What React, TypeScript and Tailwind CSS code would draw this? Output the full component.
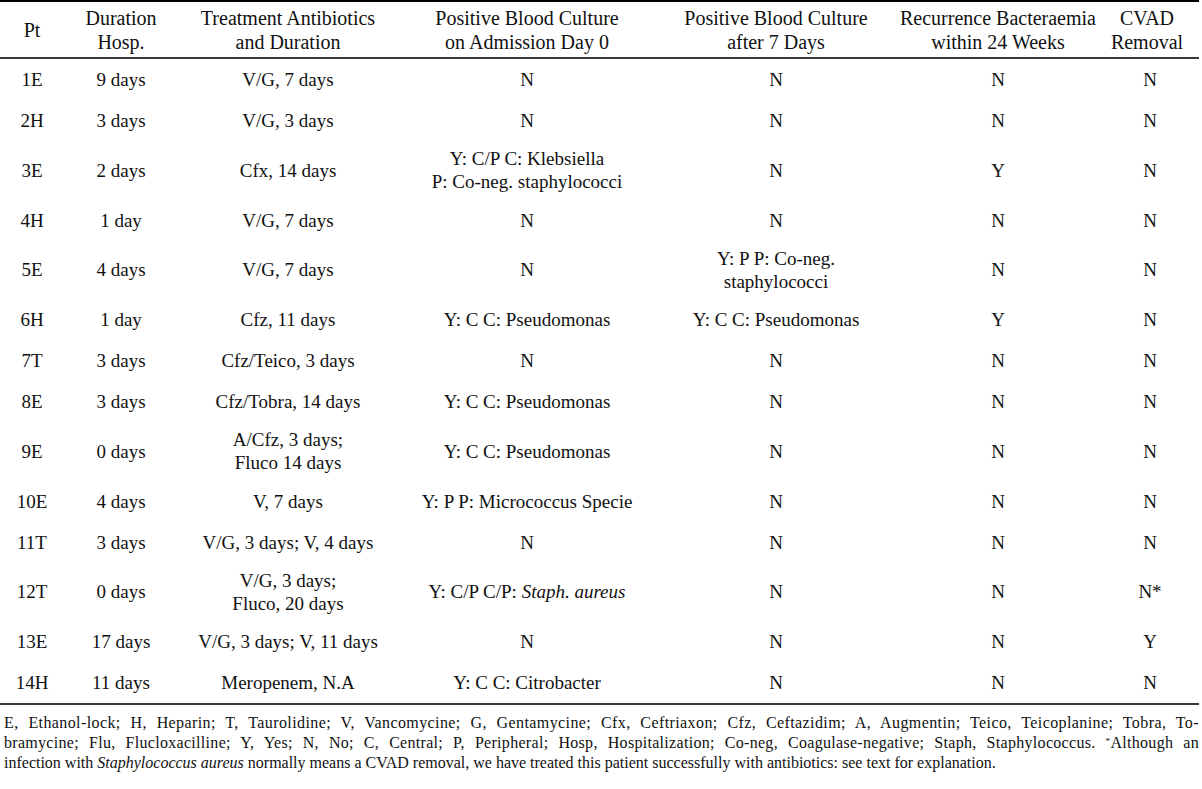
import React from 'react';

type Row = {
  pt: string;
  dur: string;
  treat: React.ReactNode;
  day0: React.ReactNode;
  after7: React.ReactNode;
  rec: string;
  cvad: string;
  tall?: boolean;
};

const rows: Row[] = [
  { pt: '1E', dur: '9 days', treat: 'V/G, 7 days', day0: 'N', after7: 'N', rec: 'N', cvad: 'N' },
  { pt: '2H', dur: '3 days', treat: 'V/G, 3 days', day0: 'N', after7: 'N', rec: 'N', cvad: 'N' },
  {
    pt: '3E',
    dur: '2 days',
    treat: 'Cfx, 14 days',
    day0: (
      <>
        <span>Y: C/P C: Klebsiella</span>
        <span>P: Co-neg. staphylococci</span>
      </>
    ),
    after7: 'N',
    rec: 'Y',
    cvad: 'N',
    tall: true,
  },
  { pt: '4H', dur: '1 day', treat: 'V/G, 7 days', day0: 'N', after7: 'N', rec: 'N', cvad: 'N' },
  {
    pt: '5E',
    dur: '4 days',
    treat: 'V/G, 7 days',
    day0: 'N',
    after7: (
      <>
        <span>Y: P P: Co-neg.</span>
        <span>staphylococci</span>
      </>
    ),
    rec: 'N',
    cvad: 'N',
    tall: true,
  },
  { pt: '6H', dur: '1 day', treat: 'Cfz, 11 days', day0: 'Y: C C: Pseudomonas', after7: 'Y: C C: Pseudomonas', rec: 'Y', cvad: 'N' },
  { pt: '7T', dur: '3 days', treat: 'Cfz/Teico, 3 days', day0: 'N', after7: 'N', rec: 'N', cvad: 'N' },
  { pt: '8E', dur: '3 days', treat: 'Cfz/Tobra, 14 days', day0: 'Y: C C: Pseudomonas', after7: 'N', rec: 'N', cvad: 'N' },
  {
    pt: '9E',
    dur: '0 days',
    treat: (
      <>
        <span>A/Cfz, 3 days;</span>
        <span>Fluco 14 days</span>
      </>
    ),
    day0: 'Y: C C: Pseudomonas',
    after7: 'N',
    rec: 'N',
    cvad: 'N',
    tall: true,
  },
  { pt: '10E', dur: '4 days', treat: 'V, 7 days', day0: 'Y: P P: Micrococcus Specie', after7: 'N', rec: 'N', cvad: 'N' },
  { pt: '11T', dur: '3 days', treat: 'V/G, 3 days; V, 4 days', day0: 'N', after7: 'N', rec: 'N', cvad: 'N' },
  {
    pt: '12T',
    dur: '0 days',
    treat: (
      <>
        <span>V/G, 3 days;</span>
        <span>Fluco, 20 days</span>
      </>
    ),
    day0: (
      <span>
        Y: C/P C/P: <i>Staph. aureus</i>
      </span>
    ),
    after7: 'N',
    rec: 'N',
    cvad: 'N*',
    tall: true,
  },
  { pt: '13E', dur: '17 days', treat: 'V/G, 3 days; V, 11 days', day0: 'N', after7: 'N', rec: 'N', cvad: 'Y' },
  { pt: '14H', dur: '11 days', treat: 'Meropenem, N.A', day0: 'Y: C C: Citrobacter', after7: 'N', rec: 'N', cvad: 'N' },
];

const cols = 'grid grid-cols-[64px_114px_220px_258px_240px_204px_100px]';
const cell = 'flex flex-col items-center justify-center whitespace-nowrap';

const Cell = ({ children }: { children: React.ReactNode }) => <div className={cell}>{children}</div>;

export default function App() {
  return (
    <div className="w-[1202px] h-[789px] bg-white text-[#111] [font-family:'Liberation_Serif',serif] overflow-hidden">
      <div className="w-[1199px]">
        <div className={`${cols} border-t-[2px] border-b-[2px] border-t-black border-b-[#3a3a3a] h-[59px] text-[20px] leading-[24px]`}>
          <Cell>Pt</Cell>
          <Cell>
            <span>Duration</span>
            <span>Hosp.</span>
          </Cell>
          <Cell>
            <span>Treatment Antibiotics</span>
            <span>and Duration</span>
          </Cell>
          <Cell>
            <span>Positive Blood Culture</span>
            <span>on Admission Day 0</span>
          </Cell>
          <Cell>
            <span>Positive Blood Culture</span>
            <span>after 7 Days</span>
          </Cell>
          <Cell>
            <span>Recurrence Bacteraemia</span>
            <span>within 24 Weeks</span>
          </Cell>
          <div className={`${cell} pr-[6px]`}>
            <span>CVAD</span>
            <span>Removal</span>
          </div>
        </div>

        <div className="border-b-[2px] border-[#3a3a3a] text-[19px] leading-[23px]">
          {rows.map((r) => (
            <div key={r.pt} className={`${cols} ${r.tall ? 'h-[58.5px]' : 'h-[41px]'}`}>
              <Cell>{r.pt}</Cell>
              <Cell>{r.dur}</Cell>
              <Cell>{r.treat}</Cell>
              <Cell>{r.day0}</Cell>
              <Cell>{r.after7}</Cell>
              <Cell>{r.rec}</Cell>
              <Cell>{r.cvad}</Cell>
            </div>
          ))}
        </div>

        <div className="pl-[4px] pt-[8px] text-[16px] leading-[20px]">
          <div className="text-justify [text-align-last:justify] tracking-[0.4px]">
            E, Ethanol-lock; H, Heparin; T, Taurolidine; V, Vancomycine; G, Gentamycine; Cfx, Ceftriaxon; Cfz, Ceftazidim; A, Augmentin; Teico, Teicoplanine; Tobra, To-
          </div>
          <div className="text-justify [text-align-last:justify] tracking-[0.3px]">
            bramycine; Flu, Flucloxacilline; Y, Yes; N, No; C, Central; P, Peripheral; Hosp, Hospitalization; Co-neg, Coagulase-negative; Staph, Staphylococcus.{' '}
            <sup className="text-[9px]">*</sup>Although an
          </div>
          <div>
            infection with <i>Staphylococcus aureus</i> normally means a CVAD removal, we have treated this patient successfully with antibiotics: see text for explanation.
          </div>
        </div>
      </div>
    </div>
  );
}
